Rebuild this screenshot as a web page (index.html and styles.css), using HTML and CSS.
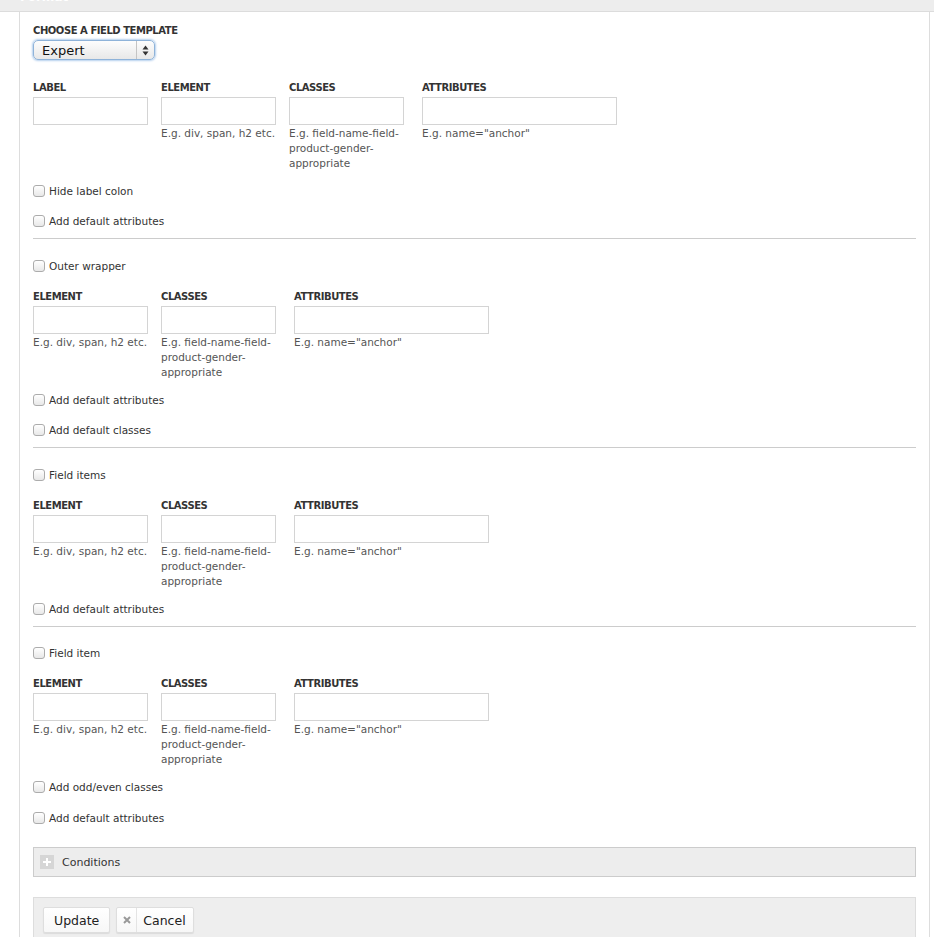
FILE: index.html
```html
<!DOCTYPE html>
<html>
<head>
<meta charset="utf-8">
<link rel="stylesheet" href="styles.css">
</head>
<body>
<div class="topbar"><span class="topbar-title">Format</span></div>
<div class="panel">
  <div class="title">Choose a field template</div>
  <div class="select"><span class="select-text">Expert</span><span class="select-arrows"><svg width="7" height="11" viewBox="0 0 7 11"><path d="M3.5 0.5 L6.5 4.5 L0.5 4.5 Z M3.5 10.5 L6.5 6.5 L0.5 6.5 Z" fill="#333"/></svg></span></div>

  <div class="fields first">
    <div class="item"><div class="lbl">Label</div><div class="input"></div></div>
    <div class="item"><div class="lbl">Element</div><div class="input"></div><div class="desc">E.g. div, span, h2 etc.</div></div>
    <div class="item wide"><div class="lbl">Classes</div><div class="input"></div><div class="desc">E.g. field-name-field-product-gender-appropriate</div></div>
    <div class="item"><div class="lbl">Attributes</div><div class="input long"></div><div class="desc">E.g. name="anchor"</div></div>
  </div>
  <div class="check first-check"><span class="box"></span>Hide label colon</div>
  <div class="check"><span class="box"></span>Add default attributes</div>
  <div class="rule"></div>

  <div class="check after-rule"><span class="box"></span>Outer wrapper</div>
  <div class="fields">
    <div class="item"><div class="lbl">Element</div><div class="input"></div><div class="desc">E.g. div, span, h2 etc.</div></div>
    <div class="item wide"><div class="lbl">Classes</div><div class="input"></div><div class="desc">E.g. field-name-field-product-gender-appropriate</div></div>
    <div class="item"><div class="lbl">Attributes</div><div class="input long"></div><div class="desc">E.g. name="anchor"</div></div>
  </div>
  <div class="check first-check"><span class="box"></span>Add default attributes</div>
  <div class="check"><span class="box"></span>Add default classes</div>
  <div class="rule"></div>

  <div class="check after-rule"><span class="box"></span>Field items</div>
  <div class="fields">
    <div class="item"><div class="lbl">Element</div><div class="input"></div><div class="desc">E.g. div, span, h2 etc.</div></div>
    <div class="item wide"><div class="lbl">Classes</div><div class="input"></div><div class="desc">E.g. field-name-field-product-gender-appropriate</div></div>
    <div class="item"><div class="lbl">Attributes</div><div class="input long"></div><div class="desc">E.g. name="anchor"</div></div>
  </div>
  <div class="check first-check"><span class="box"></span>Add default attributes</div>
  <div class="rule"></div>

  <div class="check after-rule fi"><span class="box"></span>Field item</div>
  <div class="fields">
    <div class="item"><div class="lbl">Element</div><div class="input"></div><div class="desc">E.g. div, span, h2 etc.</div></div>
    <div class="item wide"><div class="lbl">Classes</div><div class="input"></div><div class="desc">E.g. field-name-field-product-gender-appropriate</div></div>
    <div class="item"><div class="lbl">Attributes</div><div class="input long"></div><div class="desc">E.g. name="anchor"</div></div>
  </div>
  <div class="check first-check"><span class="box"></span>Add odd/even classes</div>
  <div class="check last-check"><span class="box"></span>Add default attributes</div>

  <div class="conditions"><span class="plus"><svg width="14" height="14" viewBox="0 0 14 14"><path d="M7 3 V11 M3 7 H11" stroke="#fff" stroke-width="2"/></svg></span>Conditions</div>

  <div class="actions">
    <span class="btn">Update</span>
    <span class="btn cancel"><span class="x"><svg width="8" height="8" viewBox="0 0 8 8"><path d="M1 1 L7 7 M7 1 L1 7" stroke="#999" stroke-width="2"/></svg></span><span class="cancel-text">Cancel</span></span>
  </div>
</div>
</body>
</html>
```

FILE: styles.css
```css
html, body {
  margin: 0;
  padding: 0;
  background: #fff;
  font-family: "DejaVu Sans", "Liberation Sans", sans-serif;
  color: #333;
}
.topbar {
  height: 11px;
  background: #ededed;
  border-bottom: 1px solid #dcdcdc;
  overflow: hidden;
}
.topbar-title {
  display: block;
  margin: -9px 0 0 20px;
  color: #fff;
  font-size: 12px;
  font-weight: bold;
  line-height: 12px;
}
.panel {
  margin-left: 19px;
  width: 883px;
  border-left: 1px solid #ddd;
  border-right: 1px solid #ddd;
  padding: 12px 13px 0 13px;
  height: 913px;
  overflow: hidden;
}
.title {
  font-size: 10px;
  font-weight: bold;
  text-transform: uppercase;
  letter-spacing: -0.45px;
  line-height: 14px;
  height: 14px;
  color: #333;
}
.select {
  margin-top: 2px;
  width: 120px;
  height: 18px;
  border: 1px solid #8fb3d9;
  border-radius: 5px;
  box-shadow: 0 0 2px 1px #b5d0ee;
  background: linear-gradient(#fdfdfd, #e8e8e8);
  display: flex;
  align-items: center;
  box-sizing: content-box;
}
.select-text {
  flex: 1;
  font-size: 13px;
  padding-left: 8px;
  color: #111;
}
.select-arrows {
  width: 17px;
  height: 18px;
  border-left: 1px solid #c4c4c4;
  display: flex;
  align-items: center;
  justify-content: center;
}
.fields {
  display: flex;
  margin-top: 8px;
}
.fields.first {
  margin-top: 20px;
}
.item {
  width: 115px;
  margin-right: 13px;
}
.item.wide {
  width: 120px;
}
.lbl {
  font-size: 10px;
  font-weight: bold;
  text-transform: uppercase;
  letter-spacing: -0.45px;
  line-height: 14px;
  height: 14px;
  padding-top: 1px;
  color: #333;
}
.input {
  margin-top: 2px;
  width: 113px;
  height: 26px;
  border: 1px solid #d4d4d4;
  background: #fff;
}
.input.long {
  width: 193px;
}
.desc {
  margin-top: 1px;
  font-size: 10.5px;
  line-height: 15px;
  color: #555;
  height: 45px;
}
.item:first-child .input:last-child {
  margin-bottom: 46px;
}
.check {
  height: 30px;
  display: flex;
  align-items: center;
  font-size: 10.5px;
  color: #333;
}
.first-check {
  margin-top: 5px;
}
.last-check {
  margin-top: 1px;
}
.after-rule {
  margin-top: 12px;
}
.after-rule.fi {
  margin-top: 11px;
}
.box {
  width: 10px;
  height: 10px;
  border: 1px solid #acacac;
  border-radius: 3px;
  background: linear-gradient(#fff, #e8e8e8);
  margin-right: 4px;
  margin-left: 0;
}
.rule {
  margin-top: 2px;
  height: 1px;
  background: #ccc;
}
.conditions {
  margin-top: 14px;
  height: 28px;
  border: 1px solid #cccccc;
  background: #ededed;
  display: flex;
  align-items: center;
  font-size: 11px;
  color: #333;
}
.plus {
  width: 14px;
  height: 14px;
  background: #d6d6d6;
  margin: 0 8px 0 6px;
  display: flex;
}
.actions {
  margin-top: 20px;
  height: 60px;
  border: 1px solid #dddddd;
  background: #eeeeee;
  padding: 9px 9px 0 9px;
  display: flex;
  align-items: flex-start;
  gap: 6px;
}
.btn {
  height: 24px;
  border: 1px solid #dedede;
  border-radius: 2px;
  background: linear-gradient(#ffffff, #f7f7f7);
  box-shadow: 0 1px 1px rgba(0,0,0,0.08);
  display: flex;
  align-items: center;
  font-size: 12.5px;
  color: #222;
  padding: 0 10px;
}
.btn.cancel {
  padding: 0;
}
.x {
  width: 19px;
  height: 24px;
  border-right: 1px solid #e4e4e4;
  display: flex;
  align-items: center;
  justify-content: center;
}
.cancel-text {
  padding: 0 7px 0 6px;
}
```
